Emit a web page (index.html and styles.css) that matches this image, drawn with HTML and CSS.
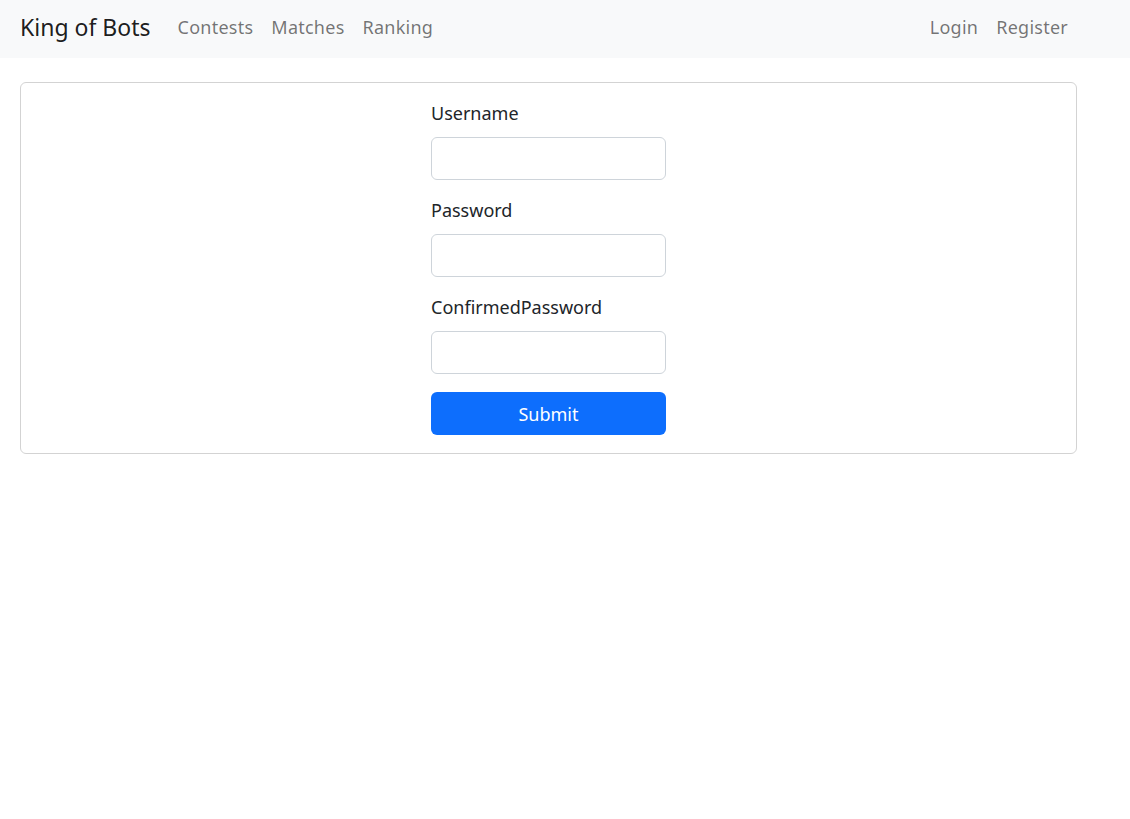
FILE: index.html
```html
<!DOCTYPE html>
<html lang="en">
<head>
<meta charset="utf-8">
<title>King of Bots</title>
<link rel="stylesheet" href="styles.css">
</head>
<body>
<nav class="navbar">
  <div class="nav-inner">
    <a class="brand" href="#">King of Bots</a>
    <ul class="nav-links">
      <li><a class="nav-link" href="#">Contests</a></li>
      <li><a class="nav-link" href="#">Matches</a></li>
      <li><a class="nav-link" href="#">Ranking</a></li>
    </ul>
    <ul class="nav-links nav-right">
      <li><a class="nav-link" href="#">Login</a></li>
      <li><a class="nav-link" href="#">Register</a></li>
    </ul>
  </div>
</nav>
<main class="page">
  <div class="card">
    <form class="form">
      <div class="group">
        <label class="label" for="username">Username</label>
        <input class="input" id="username" type="text">
      </div>
      <div class="group">
        <label class="label" for="password">Password</label>
        <input class="input" id="password" type="password">
      </div>
      <div class="group">
        <label class="label" for="confirmed">ConfirmedPassword</label>
        <input class="input" id="confirmed" type="password">
      </div>
      <button class="submit" type="button">Submit</button>
    </form>
  </div>
</main>
</body>
</html>
```
FILE: styles.css
```css
* { box-sizing: border-box; }
html, body { margin: 0; padding: 0; }
body {
  font-family: "Noto Sans", "Open Sans", "Liberation Sans", sans-serif;
  font-size: 18px;
  line-height: 24px;
  color: #212529;
  background: #fff;
}
.navbar {
  background: #f8f9fa;
  height: 58px;
}
.nav-inner {
  display: flex;
  align-items: center;
  height: 58px;
  padding: 0 54px 4px 20px;
}
.brand {
  font-size: 23px;
  line-height: 30px;
  color: rgba(0, 0, 0, 0.9);
  text-decoration: none;
  margin-right: 19px;
}
.nav-links {
  display: flex;
  list-style: none;
  margin: 0;
  padding: 0;
  gap: 2px;
}
.nav-right { margin-left: auto; }
.nav-link {
  display: block;
  padding: 8px 8px;
  color: rgba(0, 0, 0, 0.55);
  text-decoration: none;
  font-size: 18px;
  letter-spacing: 0.25px;
}
.page {
  padding: 24px 53px 0 20px;
}
.card {
  border: 1px solid #d3d3d3;
  border-radius: 6px;
  padding: 16px 16px 18px;
}
.form {
  width: 235px;
  margin: 0 auto;
}
.group {
  margin-bottom: 16px;
}
.label {
  display: block;
  line-height: 24px;
  margin-bottom: 14px;
  font-size: 18px;
  position: relative;
  top: 2px;
}
.input {
  display: block;
  width: 100%;
  height: 43px;
  border: 1px solid #ced4da;
  border-radius: 6px;
  padding: 6px 12px;
  font: inherit;
  background: #fff;
}
.submit {
  display: block;
  width: 100%;
  height: 43px;
  margin-top: 18px;
  border: none;
  border-radius: 6px;
  background: #0d6efd;
  color: #fff;
  font: inherit;
  font-size: 18px;
}
```
